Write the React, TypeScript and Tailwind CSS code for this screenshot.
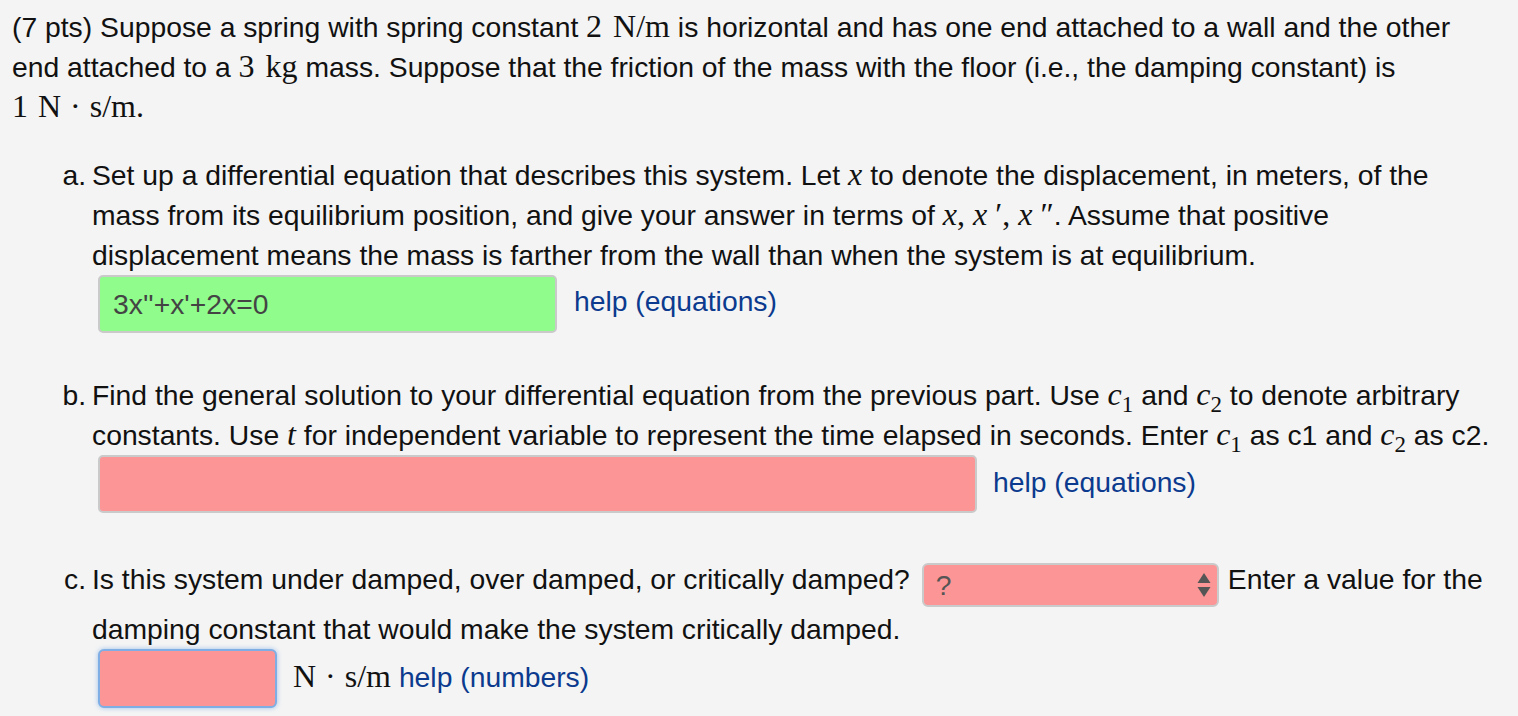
import React from 'react';

const serif = "font-['Liberation_Serif','Times_New_Roman',serif]";

function M({ children, className = '' }: { children: React.ReactNode; className?: string }) {
  return <span className={`${serif} text-[32px] leading-none ${className}`}>{children}</span>;
}

function C({ n }: { n: string }) {
  return (
    <span className={`${serif} text-[32px] leading-none`}>
      <i>c</i>
      <span className="relative top-[7px] text-[23px] leading-none">{n}</span>
    </span>
  );
}

function Help({ label, className = '' }: { label: string; className?: string }) {
  return (
    <a href="#" className={`text-[#0b3a8e] ${className}`}>
      help ({label})
    </a>
  );
}

function Part({ mark, children }: { mark: string; children: React.ReactNode }) {
  return (
    <div className="flex">
      <span className="w-[80px] shrink-0 pr-[6px] text-right">{mark}</span>
      <div className="flex-1">{children}</div>
    </div>
  );
}

export default function App() {
  return (
    <div className="min-h-screen bg-[#f4f4f4] font-['Liberation_Sans',Arial,sans-serif] text-[28.3px] leading-[40px] text-[#111]">
      <div className="pl-[12px] pt-[7px] whitespace-nowrap">
        <p>
          (7 pts) Suppose a spring with spring constant <M>2<span className="ml-[11px]">N/m</span></M> is horizontal and has one end attached to a wall and the other
          <br />
          end attached to a <M>3<span className="ml-[11px]">kg</span></M> mass. Suppose that the friction of the mass with the floor (i.e., the damping constant) is
          <br />
          <M>1<span className="ml-[10px]">N</span><span className="mx-[9px]">·</span>s/m.</M>
        </p>

        <div className="mt-[28px]">
          <Part mark="a.">
            <p>
              Set up a differential equation that describes this system. Let <M><i>x</i></M> to denote the displacement, in meters, of the
              <br />
              mass from its equilibrium position, and give your answer in terms of <M><i>x</i>, <i>x</i> ′, <i>x</i> ″</M>. Assume that positive
              <br />
              displacement means the mass is farther from the wall than when the system is at equilibrium.
            </p>
            <div className="flex items-start">
              <div className="ml-[6px] flex h-[58px] w-[459px] items-center rounded-[5px] border-2 border-[#cacaca] bg-[#8ffc8c] px-[13px] text-[#444]">
                3x''+x'+2x=0
              </div>
              <Help label="equations" className="ml-[17px] mt-[6px]" />
            </div>
          </Part>
        </div>

        <div className="mt-[42px]">
          <Part mark="b.">
            <p>
              Find the general solution to your differential equation from the previous part. Use <C n="1" /> and <C n="2" /> to denote arbitrary
              <br />
              constants. Use <M><i>t</i></M> for independent variable to represent the time elapsed in seconds. Enter <C n="1" /> as c1 and <C n="2" /> as c2.
            </p>
            <div className="flex items-start">
              <div className="ml-[6px] h-[58px] w-[879px] rounded-[5px] border-2 border-[#cacaca] bg-[#fc9696]" />
              <Help label="equations" className="ml-[16px] mt-[7px]" />
            </div>
          </Part>
        </div>

        <div className="mt-[46px]">
          <Part mark="c.">
            <div className="flex items-start">
              <span>Is this system under damped, over damped, or critically damped?</span>
              <div className="ml-[12px] mt-[4px] flex h-[44px] w-[297px] items-center justify-between rounded-[6px] border-2 border-[#cacaca] bg-[#fc9696] pl-[12px] pr-[6px] text-[#555]">
                <span>?</span>
                <svg width="14" height="28" viewBox="0 0 14 28" className="fill-[#555]">
                  <path d="M7 2 L13.5 12 L0.5 12 Z" />
                  <path d="M0.5 16 L13.5 16 L7 26 Z" />
                </svg>
              </div>
              <span className="ml-[9px]">Enter a value for the</span>
            </div>
            <p className="mt-[2px]">damping constant that would make the system critically damped.</p>
            <div className="flex items-start">
              <div className="ml-[6px] h-[59px] w-[179px] rounded-[6px] border-2 border-[#7eaee3] bg-[#fc9696] shadow-[0_0_5px_rgba(102,160,230,0.6)]" />
              <span className="ml-[16px] mt-[8px]">
                <M>N<span className="mx-[9px]">·</span>s/m</M> <Help label="numbers" />
              </span>
            </div>
          </Part>
        </div>
      </div>
    </div>
  );
}
